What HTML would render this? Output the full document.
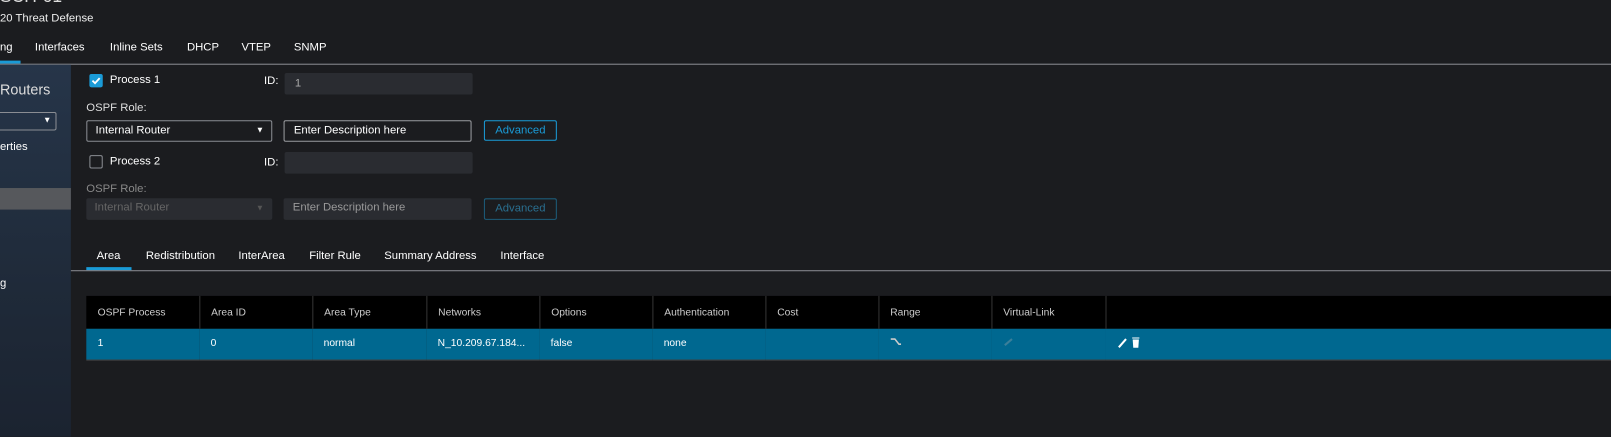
<!DOCTYPE html>
<html><head><style>
*{margin:0;padding:0;box-sizing:border-box}
body{width:1611px;height:425px;background:#1b1c1f;font-family:"Liberation Sans",Arial,sans-serif;color:#fff;position:relative;overflow:hidden;font-size:11px}
#w{position:absolute;left:0;top:0;width:1568px;height:414px;transform:scale(1.0274);transform-origin:0 0}
.a{position:absolute;white-space:nowrap}
.inp{position:absolute;background:#2a2c31;border-radius:2px}
.box{position:absolute;border:1px solid #8a8d93;border-radius:2px}
.btn{position:absolute;border:1px solid #1a9bd7;border-radius:2px;color:#1a9bd7;text-align:center;font-size:11px;line-height:18px}
th,td{font-size:10px;text-align:left;padding-left:11px;font-weight:normal}
</style></head><body><div id="w">
<div class="a" style="left:0;top:-13px;font-size:17px;color:#ddd">SCH-01</div>
<div class="a" style="left:0;top:12px;font-size:11px;color:#eee">20 Threat Defense</div>
<div class="a" style="left:0;top:40px;font-size:11px">ng</div>
<div class="a" style="left:34px;top:40px;font-size:11px">Interfaces</div>
<div class="a" style="left:107px;top:40px;font-size:11px">Inline Sets</div>
<div class="a" style="left:182px;top:40px;font-size:11px">DHCP</div>
<div class="a" style="left:235px;top:40px;font-size:11px">VTEP</div>
<div class="a" style="left:286px;top:40px;font-size:11px">SNMP</div>
<div class="a" style="left:0;top:59px;width:20px;height:3px;background:#1a9bd7"></div>
<div class="a" style="left:0;top:62px;width:1611px;height:1px;background:#8a8c92"></div>
<div class="a" style="left:0;top:63px;width:69px;height:362px;background:linear-gradient(#263549,#1f2a39 60%,#1b2330)"></div>
<div class="a" style="left:0;top:79px;font-size:14px;color:#ddd">Routers</div>
<div class="box" style="left:-4px;top:109px;width:59px;height:18px"></div>
<div class="a" style="left:42px;top:112px;font-size:8px">▼</div>
<div class="a" style="left:0;top:137px;font-size:11px">erties</div>
<div class="a" style="left:0;top:183px;width:69px;height:21px;background:#56585c"></div>
<div class="a" style="left:0;top:270px;font-size:11px">g</div>

<div class="a" style="left:87px;top:72px;width:13px;height:13px;background:#1a9bd7;border-radius:2px"><svg width="13" height="13"><path d="M3 6.5l2.5 2.5 4.5-5" stroke="#fff" stroke-width="1.8" fill="none"/></svg></div>
<div class="a" style="left:107px;top:72px">Process 1</div>
<div class="a" style="left:257px;top:73px">ID:</div>
<div class="inp" style="left:277px;top:71px;width:183px;height:21px"><span class="a" style="left:10px;top:4px;color:#aaa">1</span></div>
<div class="a" style="left:84px;top:99px;color:#ddd">OSPF Role:</div>
<div class="box" style="left:84px;top:117px;width:181px;height:21px"><span class="a" style="left:8px;top:3px">Internal Router</span><span class="a" style="left:164px;top:4px;font-size:8px">▼</span></div>
<div class="box" style="left:276px;top:117px;width:183px;height:21px;border-color:#9a9ca0"><span class="a" style="left:9px;top:3px">Enter Description here</span></div>
<div class="btn" style="left:471px;top:117px;width:71px;height:20px">Advanced</div>

<div class="a" style="left:87px;top:151px;width:13px;height:13px;border:1px solid #8a8d93;border-radius:2px"></div>
<div class="a" style="left:107px;top:151px">Process 2</div>
<div class="a" style="left:257px;top:152px">ID:</div>
<div class="inp" style="left:277px;top:148px;width:183px;height:21px"></div>
<div class="a" style="left:84px;top:178px;color:#888">OSPF Role:</div>
<div class="inp" style="left:84px;top:193px;width:181px;height:21px"><span class="a" style="left:8px;top:3px;color:#666">Internal Router</span><span class="a" style="left:165px;top:5px;font-size:8px;color:#555">▼</span></div>
<div class="inp" style="left:276px;top:193px;width:183px;height:21px"><span class="a" style="left:9px;top:3px;color:#999">Enter Description here</span></div>
<div class="btn" style="left:471px;top:193px;width:71px;height:21px;border-color:#1d5c7a;color:#2a6f90">Advanced</div>

<div class="a" style="left:94px;top:243px">Area</div>
<div class="a" style="left:142px;top:243px">Redistribution</div>
<div class="a" style="left:232px;top:243px">InterArea</div>
<div class="a" style="left:301px;top:243px">Filter Rule</div>
<div class="a" style="left:374px;top:243px">Summary Address</div>
<div class="a" style="left:487px;top:243px">Interface</div>
<div class="a" style="left:84px;top:260px;width:44px;height:3px;background:#1a9bd7"></div>
<div class="a" style="left:69px;top:263px;width:1542px;height:1px;background:#8a8c92"></div>

<table class="a" style="left:84px;top:288px;border-collapse:collapse;width:1500px">
<tr style="background:#000;height:32px;color:#ccc">
<th style="width:110px;border-right:1px solid #333">OSPF Process</th><th style="width:110px;border-right:1px solid #333">Area ID</th><th style="width:111px;border-right:1px solid #333">Area Type</th><th style="width:110px;border-right:1px solid #333">Networks</th><th style="width:110px;border-right:1px solid #333">Options</th><th style="width:110px;border-right:1px solid #333">Authentication</th><th style="width:110px;border-right:1px solid #333">Cost</th><th style="width:110px;border-right:1px solid #333">Range</th><th style="width:111px;border-right:1px solid #333">Virtual-Link</th><th></th></tr>
<tr style="background:#006890;height:30px;border-bottom:1px solid #444">
<td>1</td><td>0</td><td>normal</td><td>N_10.209.67.184...</td><td>false</td><td>none</td><td></td>
<td><svg width="12" height="10"><path d="M1 2h4l4 5h2" stroke="#ccc" stroke-width="1.5" fill="none"/></svg></td>
<td><svg width="12" height="10"><path d="M2 8l7-6" stroke="#3b7f9a" stroke-width="2"/></svg></td>
<td><svg width="24" height="12"><path d="M2 11l7-8" stroke="#fff" stroke-width="2"/><path d="M15 2h7M16 4h5l-.5 7h-4z" stroke="#fff" fill="#fff" stroke-width="1"/></svg></td></tr>
</table>
</div></body></html>
